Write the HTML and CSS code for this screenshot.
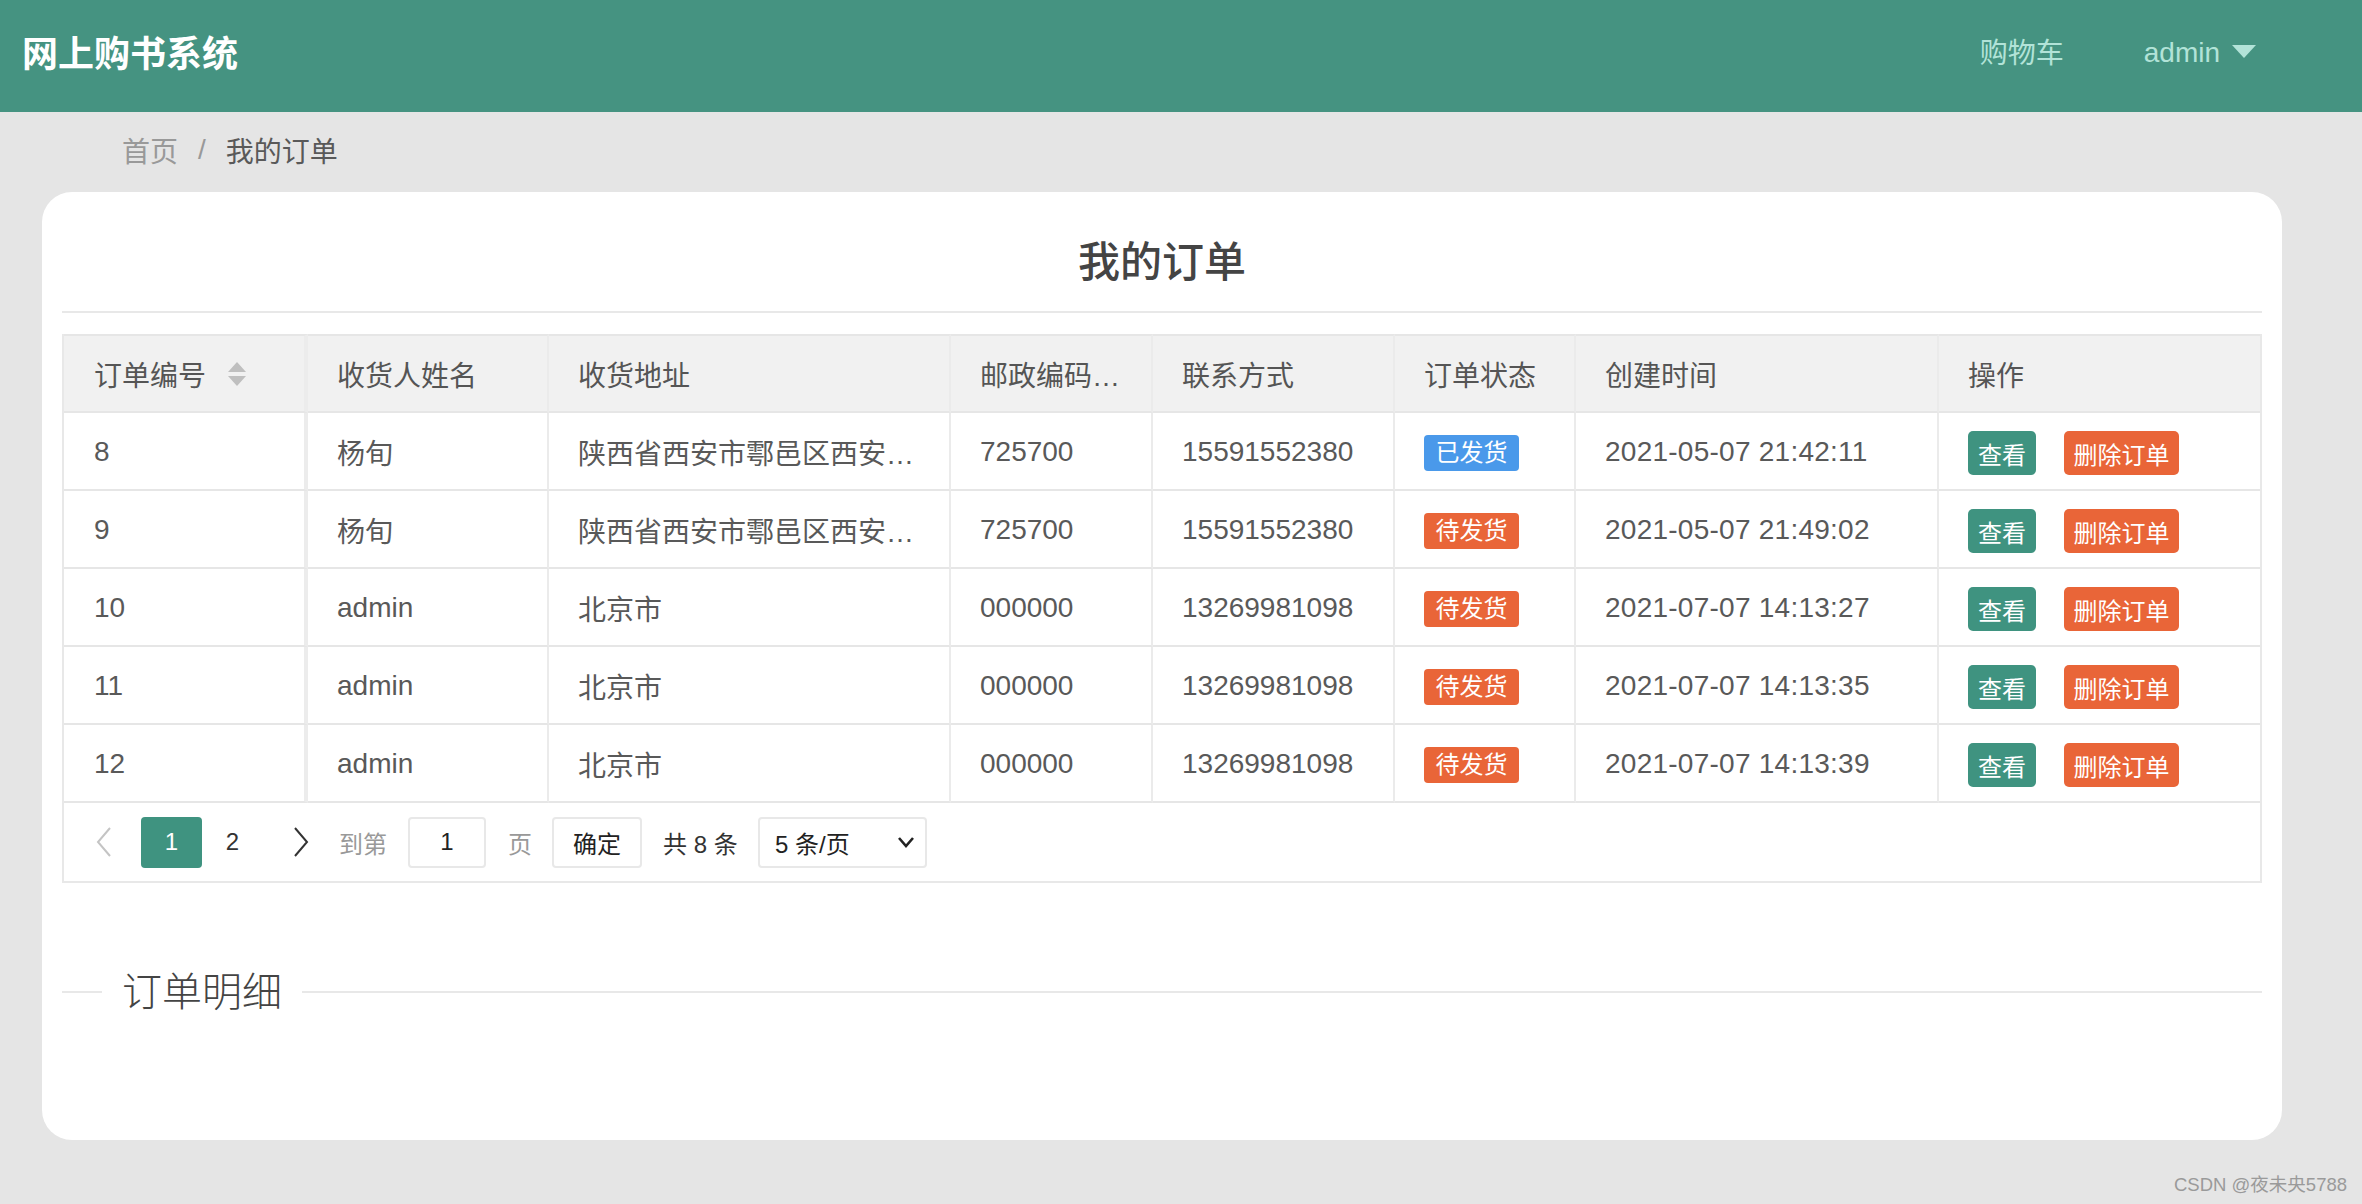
FILE: index.html
```html
<!DOCTYPE html>
<html lang="zh-CN">
<head>
<meta charset="utf-8">
<title>我的订单</title>
<link rel="stylesheet" href="styles.css">
</head>
<body>
<header class="topbar">
  <div class="brand">网上购书系统</div>
  <nav class="topnav">
    <a class="topnav-link">购物车</a>
    <a class="topnav-link user">admin
      <svg class="caret" viewBox="0 0 24 13" width="24" height="13"><path d="M0 0H24L12 13Z" fill="currentColor"/></svg>
    </a>
  </nav>
</header>
<div class="crumbs">
  <span class="crumb-link">首页</span>
  <span class="crumb-sep">/</span>
  <span class="crumb-current">我的订单</span>
</div>
<main class="card">
  <h2 class="card-title">我的订单</h2>
  <div class="table-wrap">
    <table class="orders">
      <colgroup>
        <col class="c1"><col class="c2"><col class="c3"><col class="c4"><col class="c5"><col class="c6"><col class="c7"><col class="c8">
      </colgroup>
      <thead>
        <tr>
          <th class="fixed"><span class="sort-head">订单编号
            <svg class="sorter" viewBox="0 0 22 24" width="22" height="24"><path d="M11 0L20 10H2Z" fill="#bfbfbf"/><path d="M2 14H20L11 24Z" fill="#bfbfbf"/></svg></span></th>
          <th>收货人姓名</th><th>收货地址</th><th>邮政编码…</th><th>联系方式</th><th>订单状态</th><th>创建时间</th><th>操作</th>
        </tr>
      </thead>
      <tbody>
        <tr><td class="fixed">8</td><td>杨旬</td><td>陕西省西安市鄠邑区西安…</td><td>725700</td><td>15591552380</td><td><span class="tag tag-sent">已发货</span></td><td class="time">2021-05-07 21:42:11</td><td class="ops"><button class="btn btn-view">查看</button><button class="btn btn-del">删除订单</button></td></tr>
        <tr><td class="fixed">9</td><td>杨旬</td><td>陕西省西安市鄠邑区西安…</td><td>725700</td><td>15591552380</td><td><span class="tag tag-wait">待发货</span></td><td class="time">2021-05-07 21:49:02</td><td class="ops"><button class="btn btn-view">查看</button><button class="btn btn-del">删除订单</button></td></tr>
        <tr><td class="fixed">10</td><td>admin</td><td>北京市</td><td>000000</td><td>13269981098</td><td><span class="tag tag-wait">待发货</span></td><td class="time">2021-07-07 14:13:27</td><td class="ops"><button class="btn btn-view">查看</button><button class="btn btn-del">删除订单</button></td></tr>
        <tr><td class="fixed">11</td><td>admin</td><td>北京市</td><td>000000</td><td>13269981098</td><td><span class="tag tag-wait">待发货</span></td><td class="time">2021-07-07 14:13:35</td><td class="ops"><button class="btn btn-view">查看</button><button class="btn btn-del">删除订单</button></td></tr>
        <tr><td class="fixed">12</td><td>admin</td><td>北京市</td><td>000000</td><td>13269981098</td><td><span class="tag tag-wait">待发货</span></td><td class="time">2021-07-07 14:13:39</td><td class="ops"><button class="btn btn-view">查看</button><button class="btn btn-del">删除订单</button></td></tr>
      </tbody>
    </table>
    <div class="pager">
      <svg class="arrow arrow-prev" viewBox="0 0 16 32" width="16" height="32"><path d="M14 2L2 16L14 30" fill="none" stroke="#c4c4c4" stroke-width="2"/></svg>
      <span class="page active">1</span>
      <span class="page">2</span>
      <svg class="arrow arrow-next" viewBox="0 0 16 32" width="16" height="32"><path d="M2 2L14 16L2 30" fill="none" stroke="#333" stroke-width="2"/></svg>
      <span class="pager-label to">到第</span>
      <input class="jump" value="1">
      <span class="pager-label pg">页</span>
      <button class="confirm">确定</button>
      <span class="total">共 8 条</span>
      <div class="size-select">5 条/页
        <svg class="chev" viewBox="0 0 18 12" width="18" height="12"><path d="M2 2L9 10L16 2" fill="none" stroke="#222" stroke-width="2.6"/></svg>
      </div>
    </div>
  </div>
  <div class="section-divider"><span class="section-title">订单明细</span></div>
</main>
<div class="watermark">CSDN @夜未央5788</div>
</body>
</html>
```
FILE: styles.css
```css
* { box-sizing: border-box; }
html, body { margin: 0; padding: 0; }
body {
  position: relative;
  min-height: 1204px;
  background: #e5e5e5;
  font-family: "Liberation Sans", "Noto Sans CJK SC", sans-serif;
  font-size: 28px;
  color: #595959;
  overflow: hidden;
}
.topbar {
  height: 112px;
  background: #459381;
  display: flex;
  align-items: center;
  justify-content: space-between;
  padding: 0 106px 10px 22px;
}
.brand { font-size: 36px; font-weight: 700; color: #fff; }
.topnav { display: flex; align-items: center; gap: 80px; }
.topnav-link { color: #b2e3d8; font-size: 28px; display: flex; align-items: center; gap: 12px; }
.user { margin-top: 4px; }
.caret { margin-top: -4px; }
.crumbs {
  height: 80px;
  display: flex;
  align-items: center;
  padding: 0 0 4px 122px;
  color: #999;
}
.crumb-sep { margin: 0 20px; }
.crumb-current { color: #595959; }
.card {
  height: 948px;
  margin: 0 80px 0 42px;
  padding: 0 20px;
  background: #fff;
  border-radius: 30px;
}
.card-title {
  margin: 0;
  height: 121px;
  display: flex;
  align-items: center;
  justify-content: center;
  font-size: 42px;
  font-weight: 500;
  color: #444;
  border-bottom: 2px solid #e8e8e8;
  padding-top: 13px;
}
.table-wrap {
  margin-top: 21px;
  border: 2px solid #e8e8e8;
  border-top: 0;
}
.orders {
  width: 100%;
  table-layout: fixed;
  border-collapse: separate;
  border-spacing: 0;
}
.c1 { width: 244px; } .c2 { width: 241px; } .c3 { width: 402px; } .c4 { width: 202px; }
.c5 { width: 242px; } .c6 { width: 181px; } .c7 { width: 363px; } .c8 { width: 321px; }
.orders th, .orders td {
  padding: 0 0 0 29px;
  border-right: 2px solid #ebebeb;
  border-bottom: 2px solid #e6e6e6;
  text-align: left;
  font-weight: 400;
  white-space: nowrap;
  overflow: hidden;
}
.orders th:last-child, .orders td:last-child { border-right: 0; }
.orders th {
  height: 79px;
  background: #f1f1f1;
  border-top: 2px solid #e6e6e6;
  color: #555;
}
.orders td { height: 78px; padding-top: 2px; color: #595959; }
.orders .fixed { border-right: 4px solid #ececec; padding-left: 30px; }
.orders .time { letter-spacing: 0.25px; }
.sort-head { display: flex; align-items: center; gap: 20px; }
.tag {
  display: inline-block;
  width: 95px;
  height: 36px;
  line-height: 36px;
  margin-top: 2px;
  border-radius: 4px;
  color: #fff;
  font-size: 24px;
  text-align: center;
}
.tag-sent { background: #4a99ea; }
.tag-wait { background: #e96538; }
.btn {
  height: 44px;
  padding: 0;
  margin-top: 2px;
  border: 0;
  border-radius: 5px;
  color: #fff;
  font: inherit;
  font-size: 24px;
  vertical-align: middle;
}
.btn-view { width: 68px; background: #3f9380; margin-right: 28px; }
.btn-del { width: 115px; background: #e96538; }
.pager {
  height: 78px;
  display: flex;
  align-items: center;
  font-size: 24px;
  color: #333;
}
.arrow-prev { margin-left: 32px; }
.page {
  width: 61px;
  height: 51px;
  display: flex;
  align-items: center;
  justify-content: center;
  border-radius: 4px;
}
.page.active { background: #3f9380; color: #fff; margin-left: 29px; }
.arrow-next { margin-left: 30px; }
.pager-label { color: #999; }
.to { margin-left: 30px; }
.jump {
  width: 78px;
  height: 51px;
  margin-left: 21px;
  border: 2px solid #e8e8e8;
  border-radius: 4px;
  text-align: center;
  font: inherit;
  color: #222;
  background: #fff;
}
.pg { margin-left: 22px; }
.confirm {
  width: 90px;
  height: 51px;
  margin-left: 20px;
  padding: 0;
  border: 2px solid #e8e8e8;
  border-radius: 4px;
  background: #fff;
  font: inherit;
  color: #222;
}
.total { margin-left: 21px; color: #333; width: 95px; white-space: nowrap; }
.size-select {
  width: 169px;
  height: 51px;
  display: flex;
  align-items: center;
  justify-content: space-between;
  padding: 0 10px 0 15px;
  border: 2px solid #e8e8e8;
  border-radius: 4px;
  color: #222;
}
.section-divider {
  display: flex;
  align-items: center;
  margin-top: 79px;
  height: 60px;
}
.section-divider::before { content: ""; width: 40px; height: 2px; background: #e8e8e8; }
.section-divider::after { content: ""; flex: 1; height: 2px; background: #e8e8e8; }
.section-title {
  padding: 0 20px 6px;
  font-size: 40px;
  font-weight: 300;
  color: #444;
}
.watermark {
  position: absolute;
  right: 15px;
  bottom: 8px;
  font-size: 18.5px;
  color: #9a9a9a;
}
```
